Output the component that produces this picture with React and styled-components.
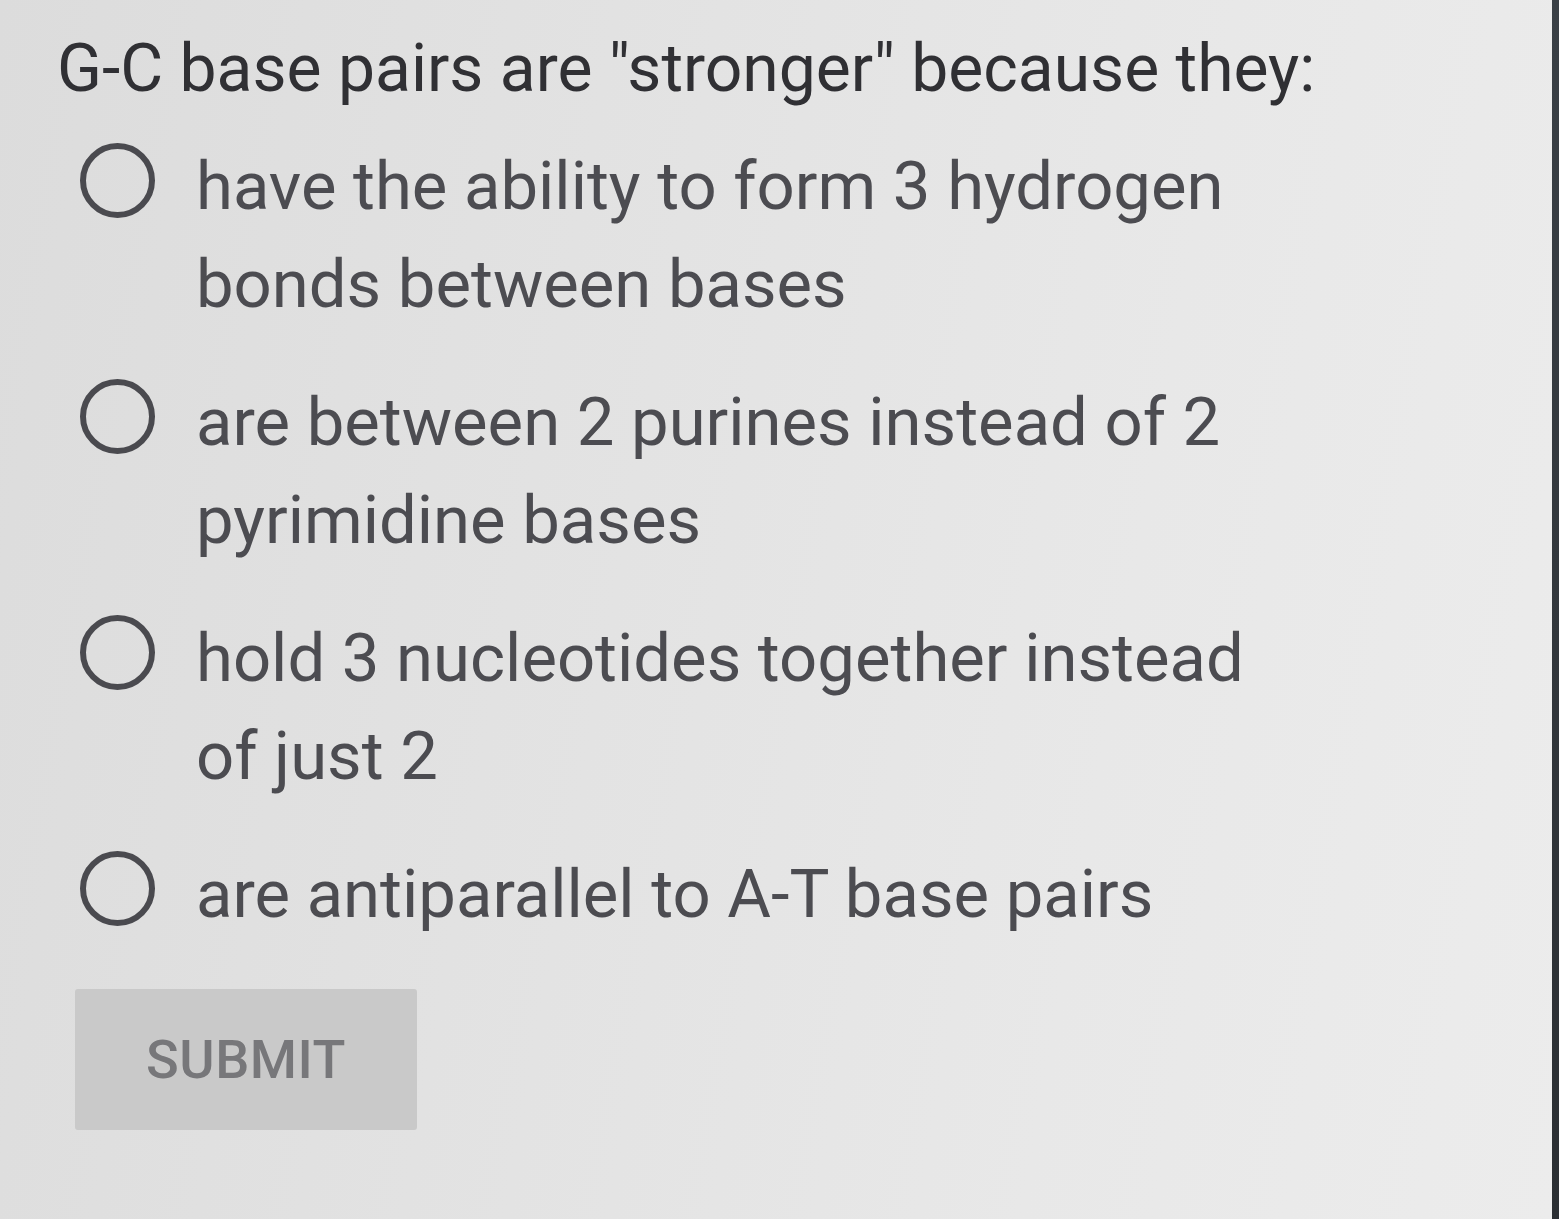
import React from "react";
import styled, { createGlobalStyle } from "styled-components";

const Global = createGlobalStyle`
  html, body { margin: 0; padding: 0; }
  body { font-family: Roboto, "Liberation Sans", Arial, sans-serif; background: #e4e4e4; }
  * { box-sizing: border-box; }
`;

const Page = styled.div`
  display: flex;
  width: 1559px;
  height: 1219px;
  overflow: hidden;
`;

const Screen = styled.main`
  flex: 1;
  display: flex;
  flex-direction: column;
  padding: 29px 0 0 57px;
  background: linear-gradient(100deg, #dcdcdc 0%, #e2e2e2 35%, #e8e8e8 70%, #ececec 100%);
`;

const Edge = styled.div`
  width: 7px;
  background: linear-gradient(180deg, #3a4046, #2b2f33);
`;

const Question = styled.h1`
  margin: 0;
  font-size: 66px;
  line-height: 80px;
  font-weight: 400;
  color: #303034;
`;

const Options = styled.div`
  display: flex;
  flex-direction: column;
  gap: 40px;
  margin-top: 28px;
  padding-left: 23px;
`;

const Option = styled.label`
  display: flex;
  align-items: flex-start;
  gap: 41px;
  cursor: pointer;
`;

const Radio = styled.span`
  flex: none;
  width: 75px;
  height: 75px;
  margin-top: 6px;
  border-radius: 50%;
  border: 6px solid #4a4a4f;
`;

const OptionText = styled.span`
  font-size: 67px;
  line-height: 98px;
  color: #4c4c51;
  max-width: 1090px;
`;

const Submit = styled.button`
  margin: 46px 0 0 18px;
  width: 342px;
  height: 141px;
  border: none;
  border-radius: 3px;
  background: #c9c9c9;
  color: #77777a;
  font-family: Roboto, "Liberation Sans", Arial, sans-serif;
  font-size: 54px;
  font-weight: 500;
  letter-spacing: 0.5px;
  text-transform: uppercase;
`;

const options = [
  "have the ability to form 3 hydrogen bonds between bases",
  "are between 2 purines instead of 2 pyrimidine bases",
  "hold 3 nucleotides together instead of just 2",
  "are antiparallel to A-T base pairs",
];

export default function App() {
  return (
    <>
      <Global />
      <Page>
        <Screen>
          <Question>G-C base pairs are "stronger" because they:</Question>
          <Options>
            {options.map((o) => (
              <Option key={o}>
                <Radio />
                <OptionText>{o}</OptionText>
              </Option>
            ))}
          </Options>
          <div>
            <Submit>Submit</Submit>
          </div>
        </Screen>
        <Edge />
      </Page>
    </>
  );
}
